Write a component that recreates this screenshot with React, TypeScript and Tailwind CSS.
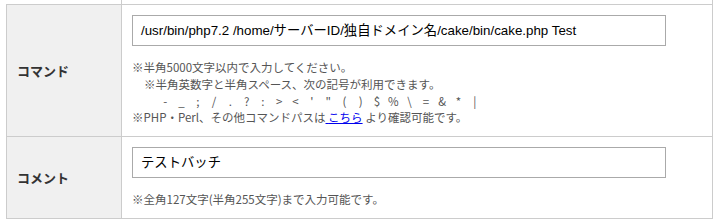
import React from "react";

const symbols = ["-", "_", ";", "/", ".", "?", ":", ">", "<", "'", "\"", "(", ")", "$", "%", "\\", "=", "&", "*", "|"];

function Label({ children }: { children: React.ReactNode }) {
  return (
    <div className="w-[115px] shrink-0 bg-[#f0f0f0] border-r border-[#cccccc] flex items-center pl-[10px] text-[13px] font-bold text-[#333333]">
      {children}
    </div>
  );
}

function TextInput({ value }: { value: string }) {
  return (
    <div className="w-[534px] h-[31px] border border-[#aaaaaa] bg-white flex items-center pl-[8px] text-[13.33px] text-black font-['Liberation_Sans','Noto_Sans_CJK_JP',sans-serif] whitespace-nowrap">
      {value}
    </div>
  );
}

export default function App() {
  return (
    <div className="w-[718px] h-[222px] bg-white overflow-hidden font-['Noto_Sans_CJK_JP',sans-serif]">
      <div className="ml-[6px] w-[707px]">
        {/* tail of the previous row */}
        <div className="flex h-[4px] border-r border-[#cccccc]">
          <div className="w-[116px] border-r border-[#cccccc]" />
        </div>

        <div className="flex border-t border-l border-r border-[#cccccc]">
          <Label>コマンド</Label>
          <div className="flex-1 px-[10px] pt-[10px] pb-[10px]">
            <TextInput value="/usr/bin/php7.2 /home/サーバーID/独自ドメイン名/cake/bin/cake.php Test" />
            <div className="mt-[13px] text-[11.5px] leading-[16.75px] text-[#555555] whitespace-nowrap">
              <div>※半角5000文字以内で入力してください。</div>
              <div className="pl-[12px]">※半角英数字と半角スペース、次の記号が利用できます。</div>
              <div className="pl-[25px] flex">
                {symbols.map((s, i) => (
                  <span key={i} className="inline-block w-[16.3px] text-center">
                    {s}
                  </span>
                ))}
              </div>
              <div>
                ※PHP・Perl、その他コマンドパスは
                <a href="#" className="text-[#0000ee] underline">
                  {" "}こちら
                </a>{" "}
                より確認可能です。
              </div>
            </div>
          </div>
        </div>

        <div className="flex border border-[#cccccc]">
          <Label>コメント</Label>
          <div className="flex-1 px-[10px] pt-[10px] pb-[10px]">
            <TextInput value="テストバッチ" />
            <div className="mt-[13px] text-[11.5px] leading-[16.75px] text-[#555555] whitespace-nowrap">
              ※全角127文字(半角255文字)まで入力可能です。
            </div>
          </div>
        </div>
      </div>
    </div>
  );
}
